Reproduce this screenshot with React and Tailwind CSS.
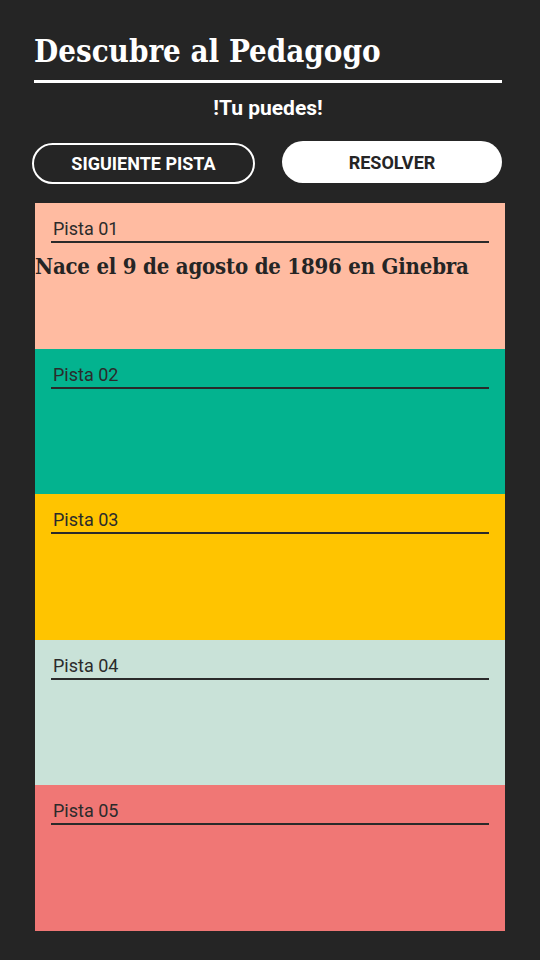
const slab = { fontFamily: "'DejaVu Serif Condensed', 'DejaVu Serif', serif" };
const roboto = { fontFamily: "Roboto, 'Liberation Sans', sans-serif" };

const pistas = [
  { id: '01', bg: 'bg-[#ffbba1]', text: 'Nace el 9 de agosto de 1896 en Ginebra' },
  { id: '02', bg: 'bg-[#03b38f]' },
  { id: '03', bg: 'bg-[#ffc400]' },
  { id: '04', bg: 'bg-[#c9e2d8]' },
  { id: '05', bg: 'bg-[#f07775]' },
];

function Pista({ id, bg, text }) {
  return (
    <div className={`${bg} h-[145.6px] flex flex-col`}>
      <div className="px-4 pt-[13px]">
        <div
          className="border-b-2 border-[#2a2a2a] pl-[2px] text-[18px] leading-[25px] text-[#2b2b2b]"
          style={roboto}
        >
          Pista {id}
        </div>
      </div>
      {text && (
        <p className="mt-[9px] text-[22px] leading-[28px] font-bold text-[#252525] tracking-[-0.2px]" style={slab}>
          {text}
        </p>
      )}
    </div>
  );
}

export default function App() {
  return (
    <div className="min-h-[960px] w-[540px] bg-[#252525] flex flex-col">
      <div className="pl-[34px] pr-[38px] pt-[31px]">
        <h1 className="text-[31px] leading-[40px] font-bold text-white" style={slab}>
          Descubre al Pedagogo
        </h1>
        <div className="mt-[9px] h-[3px] bg-white" />
        <p className="mt-[12px] text-center text-[21px] leading-[26px] font-bold text-white" style={roboto}>
          !Tu puedes!
        </p>
      </div>

      <div className="flex gap-[27px] pl-[32px] pr-[38px] mt-[20px] items-start" style={roboto}>
        <button className="w-[223px] h-[41px] mt-[2px] rounded-full border-2 border-white text-white text-[18px] font-bold">
          SIGUIENTE PISTA
        </button>
        <button className="w-[220px] h-[42px] rounded-full bg-white text-[#252525] text-[18px] font-bold">
          RESOLVER
        </button>
      </div>

      <div className="mt-[19px] ml-[35px] w-[470px] flex flex-col">
        {pistas.map((p) => (
          <Pista key={p.id} {...p} />
        ))}
      </div>
    </div>
  );
}
